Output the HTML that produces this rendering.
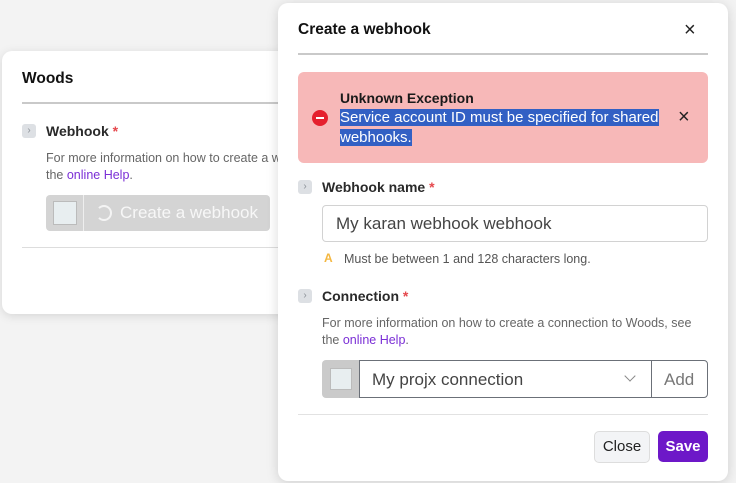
<!DOCTYPE html><html><head><style>
body{margin:0;width:736px;height:483px;background:#f3f3f3;font-family:"Liberation Sans",sans-serif;position:relative;overflow:hidden}
.a{position:absolute}
.chev{position:absolute;width:14px;height:14px;background:#dde0e4;border-radius:3px;color:#8a8f96;font-size:10px;line-height:14px;text-align:center}
.lbl{position:absolute;font-weight:bold;font-size:14px;color:#2a2a2a}
.lbl span{color:#e5484d}
.help{position:absolute;font-size:12.5px;color:#666;line-height:17px;white-space:nowrap}
.help b{font-weight:normal;color:#7b2fd6}
</style></head><body>
<div class="a" style="left:2px;top:51px;width:300px;height:263px;background:#fff;border-radius:10px;box-shadow:0 2px 10px rgba(0,0,0,.12)"></div>
<div class="a" style="left:22px;top:70px;font-weight:bold;font-size:15.5px;color:#111">Woods</div>
<div class="a" style="left:22px;top:102px;width:260px;height:2px;background:#c9c9c9"></div>
<div class="chev" style="left:22px;top:124px">›</div>
<div class="lbl" style="left:46px;top:123px">Webhook<span> *</span></div>
<div class="help" style="left:46px;top:150px">For more information on how to create a w<br>the <b>online Help</b>.</div>
<div class="a" style="left:46px;top:195px;width:224px;height:36px;background:#d4d4d4;border-radius:4px"></div>
<div class="a" style="left:53px;top:201px;width:22px;height:22px;border:1px solid #bbb;background:#e8eef0"></div>
<div class="a" style="left:83px;top:195px;width:1px;height:36px;background:#eee"></div>
<div class="a" style="left:96px;top:205px;width:12px;height:12px;border:2px solid #f4f4f4;border-left-color:transparent;border-radius:50%"></div>
<div class="a" style="left:120px;top:203px;font-size:17px;color:#f7f7f7">Create a webhook</div>
<div class="a" style="left:22px;top:247px;width:260px;height:1px;background:#ddd"></div>

<div class="a" style="left:278px;top:3px;width:450px;height:478px;background:#fff;border-radius:10px;box-shadow:0 2px 12px rgba(0,0,0,.15)"></div>
<div class="a" style="left:298px;top:21px;font-weight:bold;font-size:15.5px;color:#111">Create a webhook</div>
<div class="a" style="left:684px;top:19px;font-size:20px;color:#222">×</div>
<div class="a" style="left:298px;top:53px;width:410px;height:2px;background:#c9c9c9"></div>
<div class="a" style="left:298px;top:72px;width:410px;height:91px;background:#f7b8b8;border-radius:6px"></div>
<div class="a" style="left:312px;top:110px;width:16px;height:16px;border-radius:50%;background:#e5202e"></div>
<div class="a" style="left:316px;top:117px;width:8px;height:2px;background:#fff"></div>
<div class="a" style="left:340px;top:90px;font-weight:bold;font-size:14px;color:#1a1a1a">Unknown Exception</div>
<div class="a" style="left:340px;top:108px;font-size:15px;line-height:20px;color:#fff"><span style="background:#3260c4">Service account ID must be specified for shared </span><br><span style="background:#3260c4">webhooks.</span></div>
<div class="a" style="left:678px;top:106px;font-size:20px;color:#222">×</div>

<div class="chev" style="left:298px;top:180px">›</div>
<div class="lbl" style="left:322px;top:179px">Webhook name<span> *</span></div>
<div class="a" style="left:322px;top:205px;width:384px;height:35px;border:1px solid #d2d2d2;border-radius:4px"></div>
<div class="a" style="left:336px;top:214px;font-size:17px;color:#444">My karan webhook webhook</div>
<div class="a" style="left:324px;top:251px;font-size:12px;color:#f4b740;font-weight:bold">A</div>
<div class="a" style="left:344px;top:252px;font-size:12.5px;color:#555">Must be between 1 and 128 characters long.</div>

<div class="chev" style="left:298px;top:289px">›</div>
<div class="lbl" style="left:322px;top:288px">Connection<span> *</span></div>
<div class="help" style="left:322px;top:315px">For more information on how to create a connection to Woods, see<br>the <b>online Help</b>.</div>
<div class="a" style="left:322px;top:360px;width:37px;height:38px;background:#cacaca;border-radius:4px 0 0 4px"></div>
<div class="a" style="left:330px;top:368px;width:20px;height:20px;border:1px solid #bbb;background:#e8eef0"></div>
<div class="a" style="left:359px;top:360px;width:347px;height:36px;border:1px solid #6b7078;border-radius:0 4px 4px 0"></div>
<div class="a" style="left:651px;top:360px;width:1px;height:38px;background:#6b7078"></div>
<div class="a" style="left:372px;top:370px;font-size:17px;color:#444">My projx connection</div>
<div class="a" style="left:626px;top:372px;width:7px;height:7px;border-right:1.5px solid #888;border-bottom:1.5px solid #888;transform:rotate(45deg)"></div>
<div class="a" style="left:664px;top:370px;font-size:17px;color:#777">Add</div>
<div class="a" style="left:298px;top:414px;width:410px;height:1px;background:#e2e2e2"></div>
<div class="a" style="left:594px;top:431px;width:54px;height:30px;border:1px solid #ddd;background:#f3f4f6;border-radius:5px;font-size:15px;color:#222;text-align:center;line-height:30px">Close</div>
<div class="a" style="left:658px;top:431px;width:50px;height:31px;background:#6d18c8;border-radius:5px;font-size:15px;color:#fff;text-align:center;line-height:31px;font-weight:bold">Save</div>
</body></html>
